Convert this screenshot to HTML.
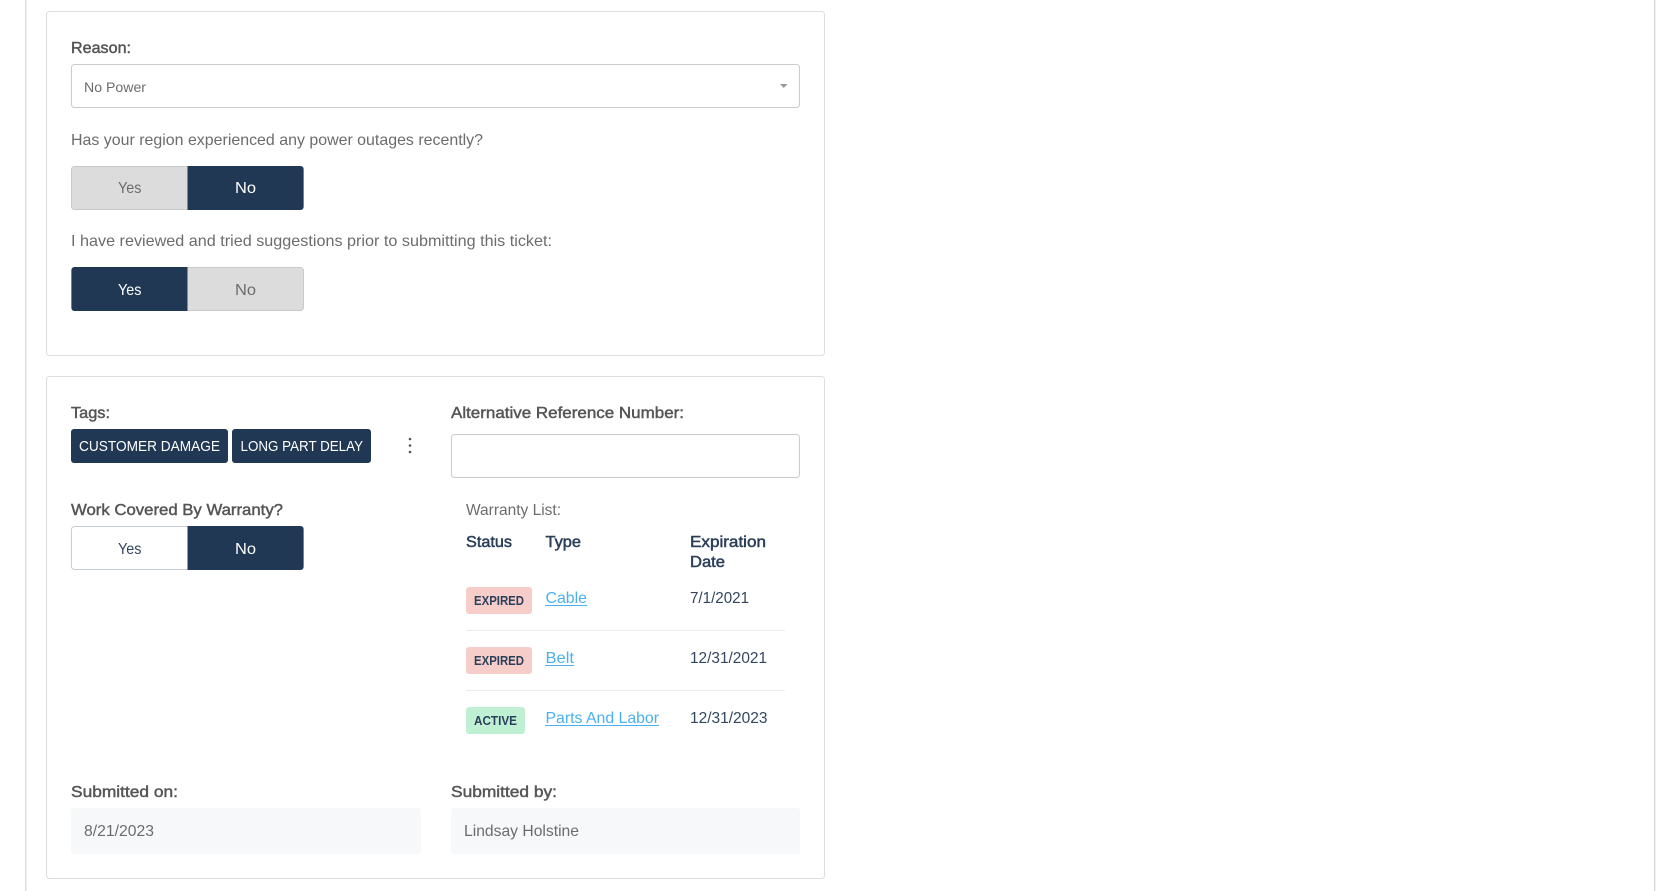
<!DOCTYPE html>
<html lang="en"><head><meta charset="utf-8"><title>Ticket</title>
<style>
html,body{margin:0;padding:0;background:#fff;width:1674px;height:891px;overflow:hidden}
svg{display:block}
text{font-family:"Liberation Sans",sans-serif;font-size:16px;white-space:pre}
.lb{fill:#555;stroke:#555;stroke-width:.45}
.t{fill:#6c6c6c}
.n{fill:#33465f}
.h{fill:#2b3f5a;stroke:#2b3f5a;stroke-width:.5}
.w{fill:#fff}
.g{fill:#6c6c6c}
.a{fill:#4ab1ee}
.b{fill:#2b3f5a;font-size:13px;font-weight:bold}
.box{fill:#fff;stroke:#cbcbcb}
.card{fill:#fff;stroke:#dedede}
</style></head><body>
<svg width="1674" height="891" viewBox="0 0 1674 891" xmlns="http://www.w3.org/2000/svg">
<rect x="25" y="0" width="1.5" height="891" fill="#dcdcdc"/>
<rect x="1654" y="0" width="1.5" height="891" fill="#dcdcdc"/>

<!-- Card 1 -->
<rect class="card" x="46.5" y="11.5" width="778" height="344" rx="3"/>
<text class="lb" x="71" y="53" textLength="60" lengthAdjust="spacingAndGlyphs">Reason:</text>
<rect class="box" x="71.5" y="64.5" width="728" height="43" rx="3"/>
<text class="t" style="font-size:14px" x="84" y="92" textLength="62" lengthAdjust="spacingAndGlyphs">No Power</text>
<path d="M780 84h7.5l-3.75 4z" fill="#999"/>
<text class="t" x="71" y="145" textLength="412" lengthAdjust="spacingAndGlyphs">Has your region experienced any power outages recently?</text>

<rect x="71.5" y="166.5" width="232" height="43" rx="3" fill="#dcdcdc" stroke="#c9c9c9"/>
<path d="M187.5 166h113a3 3 0 0 1 3 3v38a3 3 0 0 1-3 3h-113z" fill="#203854"/>
<text class="g" x="118" y="193" textLength="23.5" lengthAdjust="spacingAndGlyphs">Yes</text>
<text class="w" x="235" y="193" textLength="21" lengthAdjust="spacingAndGlyphs">No</text>

<text class="t" x="71" y="246" textLength="481" lengthAdjust="spacingAndGlyphs">I have reviewed and tried suggestions prior to submitting this ticket:</text>

<rect x="71.5" y="267.5" width="232" height="43" rx="3" fill="#dcdcdc" stroke="#c9c9c9"/>
<path d="M187.5 267h-113a3 3 0 0 0-3 3v38a3 3 0 0 0 3 3h113z" fill="#203854"/>
<text class="w" x="118" y="295" textLength="23.5" lengthAdjust="spacingAndGlyphs">Yes</text>
<text class="g" x="235" y="295" textLength="21" lengthAdjust="spacingAndGlyphs">No</text>

<!-- Card 2 -->
<rect class="card" x="46.5" y="376.5" width="778" height="502" rx="3"/>
<text class="lb" x="71" y="418" textLength="39" lengthAdjust="spacingAndGlyphs">Tags:</text>
<rect x="71" y="429" width="157" height="34" rx="3" fill="#203854"/>
<text class="w" style="font-size:15px" x="79" y="451" textLength="141" lengthAdjust="spacingAndGlyphs">CUSTOMER DAMAGE</text>
<rect x="232" y="429" width="139" height="34" rx="3" fill="#203854"/>
<text class="w" style="font-size:15px" x="240.5" y="451" textLength="122.5" lengthAdjust="spacingAndGlyphs">LONG PART DELAY</text>
<circle cx="410" cy="439" r="1.3" fill="#555"/><circle cx="410" cy="445.5" r="1.3" fill="#555"/><circle cx="410" cy="452" r="1.3" fill="#555"/>

<text class="lb" x="71" y="515" textLength="212" lengthAdjust="spacingAndGlyphs">Work Covered By Warranty?</text>
<rect x="71.5" y="526.5" width="232" height="43" rx="3" fill="#fff" stroke="#c6ccd6"/>
<path d="M187.5 526h113a3 3 0 0 1 3 3v38a3 3 0 0 1-3 3h-113z" fill="#203854"/>
<text class="n" x="118" y="554" textLength="23.5" lengthAdjust="spacingAndGlyphs">Yes</text>
<text class="w" x="235" y="554" textLength="21" lengthAdjust="spacingAndGlyphs">No</text>

<text class="lb" x="451" y="418" textLength="233" lengthAdjust="spacingAndGlyphs">Alternative Reference Number:</text>
<rect class="box" x="451.5" y="434.5" width="348" height="43" rx="3"/>

<text class="t" x="466" y="515" textLength="95" lengthAdjust="spacingAndGlyphs">Warranty List:</text>
<text class="h" x="466" y="547" textLength="46" lengthAdjust="spacingAndGlyphs">Status</text>
<text class="h" x="545.5" y="547" textLength="35.5" lengthAdjust="spacingAndGlyphs">Type</text>
<text class="h" x="690" y="547" textLength="76" lengthAdjust="spacingAndGlyphs">Expiration</text>
<text class="h" x="690" y="567" textLength="35" lengthAdjust="spacingAndGlyphs">Date</text>

<rect x="466" y="587" width="66" height="27" rx="3" fill="#f7cdc9"/>
<text class="b" x="474" y="605" textLength="50" lengthAdjust="spacingAndGlyphs">EXPIRED</text>
<text class="a" x="545.5" y="603" textLength="41.5" lengthAdjust="spacingAndGlyphs">Cable</text>
<rect x="545" y="605" width="42" height="1" fill="#4ab1ee"/>
<text class="n" x="690" y="603" textLength="59" lengthAdjust="spacingAndGlyphs">7/1/2021</text>
<rect x="466" y="630" width="319" height="1" fill="#ececec"/>

<rect x="466" y="647" width="66" height="27" rx="3" fill="#f7cdc9"/>
<text class="b" x="474" y="665" textLength="50" lengthAdjust="spacingAndGlyphs">EXPIRED</text>
<text class="a" x="545.5" y="663" textLength="28.5" lengthAdjust="spacingAndGlyphs">Belt</text>
<rect x="545" y="665" width="29" height="1" fill="#4ab1ee"/>
<text class="n" x="690" y="663" textLength="77" lengthAdjust="spacingAndGlyphs">12/31/2021</text>
<rect x="466" y="690" width="319" height="1" fill="#ececec"/>

<rect x="466" y="707" width="59" height="27" rx="3" fill="#bff0d4"/>
<text class="b" x="474" y="725" textLength="43" lengthAdjust="spacingAndGlyphs">ACTIVE</text>
<text class="a" x="545.5" y="723" textLength="113.5" lengthAdjust="spacingAndGlyphs">Parts And Labor</text>
<rect x="545" y="725" width="114" height="1" fill="#4ab1ee"/>
<text class="n" x="690" y="723" textLength="77.5" lengthAdjust="spacingAndGlyphs">12/31/2023</text>

<text class="lb" x="71" y="797" textLength="107" lengthAdjust="spacingAndGlyphs">Submitted on:</text>
<rect x="71" y="808" width="350" height="46" rx="3" fill="#f7f8fa"/>
<text class="t" x="84" y="836" textLength="70" lengthAdjust="spacingAndGlyphs">8/21/2023</text>

<text class="lb" x="451" y="797" textLength="106" lengthAdjust="spacingAndGlyphs">Submitted by:</text>
<rect x="451" y="808" width="349" height="46" rx="3" fill="#f7f8fa"/>
<text class="t" x="464" y="836" textLength="115" lengthAdjust="spacingAndGlyphs">Lindsay Holstine</text>
</svg>
</body></html>
